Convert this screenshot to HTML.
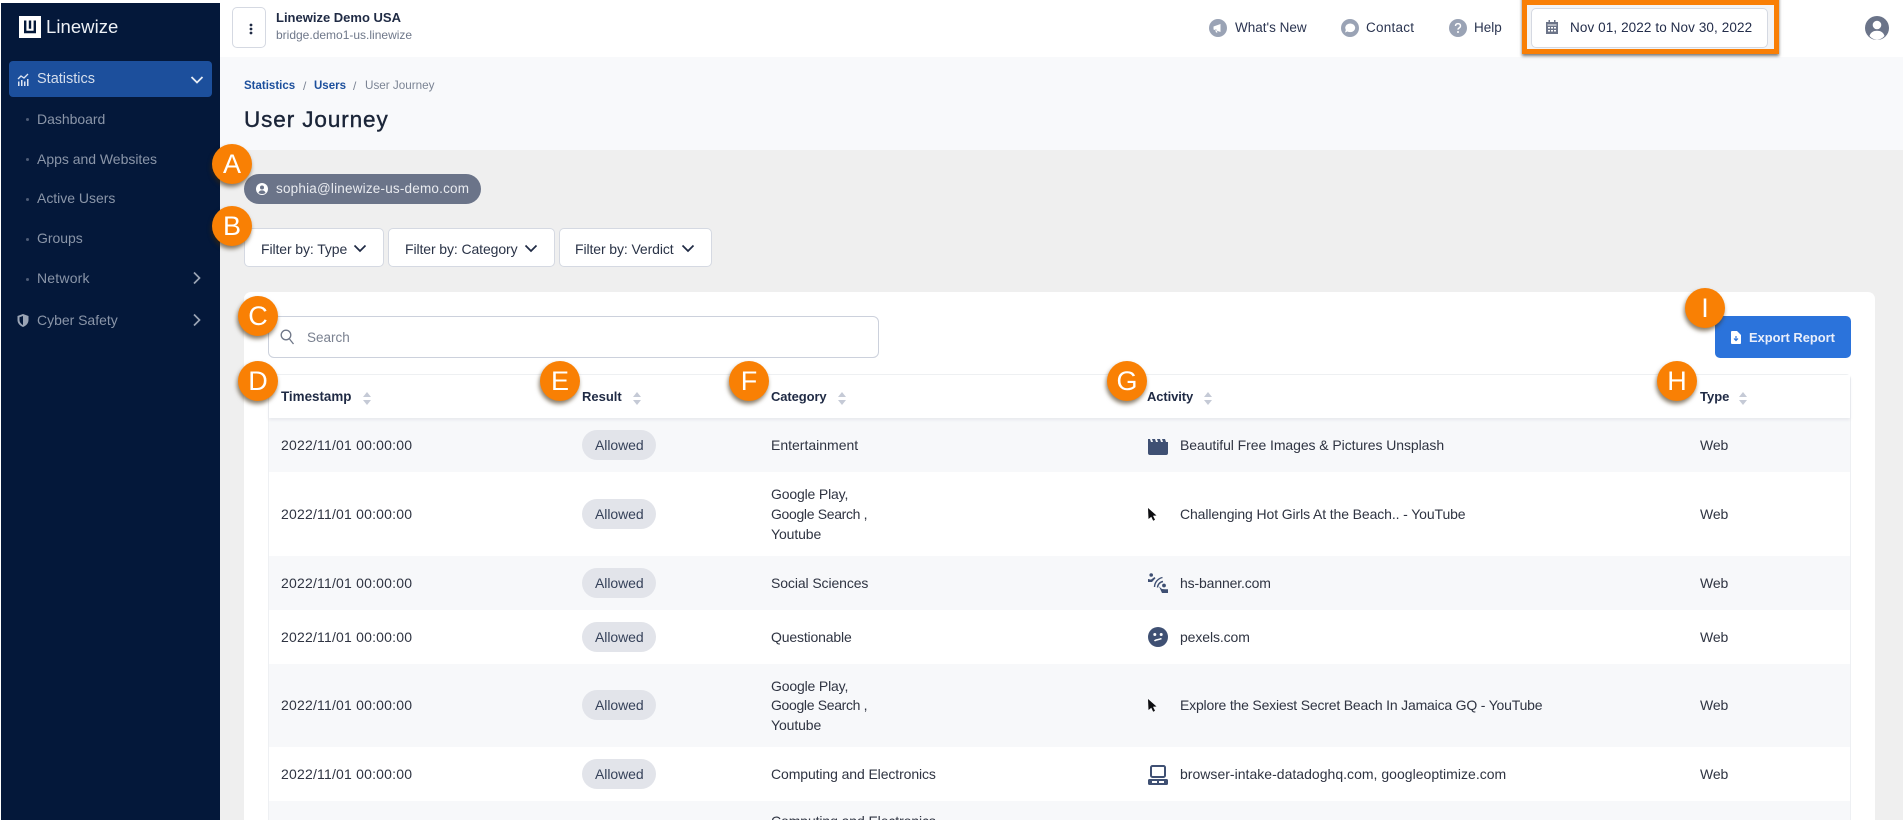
<!DOCTYPE html>
<html><head><meta charset="utf-8"><title>User Journey</title>
<style>
html,body{margin:0;padding:0;background:#fff}
#p{position:relative;width:1903px;height:820px;overflow:hidden;background:#fff;font-family:"Liberation Sans",Arial,sans-serif;font-size:14px;filter:blur(.25px)}
#p div,#p svg{position:absolute}
.t{white-space:nowrap;line-height:20px;height:20px}
.s{color:#8a95a8;font-size:14px;letter-spacing:-.02px}
.d{width:3px;height:3px;border-radius:50%;background:#4e5c76;left:26px}
.f{background:#fff;border:1px solid #d5d9e2;border-radius:5px;box-sizing:border-box;top:228px;height:39px}
.ft{color:#2a3347;top:239px;font-size:14px;letter-spacing:-.1px}
.h{color:#1f2a44;font-weight:700;font-size:13px;top:387px}
.r{left:269px;width:1581px;background:#f7f8fa}
.c{color:#2f3442;font-size:14px;letter-spacing:-.1px}
.ts{letter-spacing:.2px;left:281px}
.a{width:74px;height:30px;border-radius:15px;background:#e2e4ea;left:582px}
.at{color:#36425a;left:595px;font-size:14px;letter-spacing:-.06px}
.w{left:1700px;letter-spacing:-.1px}
.o{width:40px;height:40px;border-radius:50%;background:#f98004;box-shadow:-1px 3px 4px rgba(60,40,10,.6);color:#fff;font-size:27px;line-height:40px;text-align:center;z-index:5}
</style></head><body><div id="p">

<!-- backgrounds -->
<div style="left:220px;top:57px;width:1683px;height:93px;background:#f8f9fb"></div>
<div style="left:220px;top:150px;width:1683px;height:670px;background:#efefef"></div>
<div style="left:244px;top:292px;width:1631px;height:540px;background:#fff;border-radius:7px"></div>

<!-- sidebar -->
<div style="left:1px;top:3px;width:219px;height:817px;background:#04183a"></div>
<div style="left:19px;top:16px;width:22px;height:22px;background:#fff"></div>
<svg style="left:19px;top:16px" width="22" height="22" viewBox="0 0 22 22"><path d="M5 4.500h2.400v10.300h7.200V4.500H17v12.700H5zM9.800 4.500h2.400v8.200H9.800z" fill="#04183a"/></svg>
<div class="t" style="left:46px;top:17px;color:#eef1f6;font-size:18.500px;letter-spacing:.05px">Linewize</div>
<div style="left:9px;top:61px;width:203px;height:36px;background:#1c4f9c;border-radius:4px"></div>
<svg style="left:17px;top:73px" width="13" height="13" viewBox="0 0 13 13"><path d="M1 6l3-3 3 2 4-4" fill="none" stroke="#dfe6f2" stroke-width="1.300"/><path d="M1 8.500h1.500V13H1zM4 7h1.500v6H4zM7 8.500h1.500V13H7zM10 6h1.500v7H10z" fill="#dfe6f2"/></svg>
<div class="t" style="left:37px;top:69px;color:#d5deec;font-size:14.500px">Statistics</div>
<svg style="left:190px;top:75px" width="14" height="10" viewBox="0 0 14 10"><path d="M1.500 2l5.500 5.500L12.500 2" fill="none" stroke="#e8edf5" stroke-width="1.800"/></svg>

<div class="d" style="top:118px"></div><div class="t s" style="left:37px;top:109px">Dashboard</div>
<div class="d" style="top:158px"></div><div class="t s" style="left:37px;top:149px">Apps and Websites</div>
<div class="d" style="top:198px"></div><div class="t s" style="left:37px;top:188px">Active Users</div>
<div class="d" style="top:238px"></div><div class="t s" style="left:37px;top:228px">Groups</div>
<div class="d" style="top:278px"></div><div class="t s" style="left:37px;top:268px;letter-spacing:.2px">Network</div>
<svg style="left:192px;top:271px" width="10" height="14" viewBox="0 0 10 14"><path d="M2 1.500L7.500 7 2 12.500" fill="none" stroke="#9aa4b5" stroke-width="1.700"/></svg>
<svg style="left:17px;top:314px" width="12" height="13" viewBox="0 0 12 13"><path d="M6 0l5.500 2v4c0 3.500-2.500 5.800-5.500 7C3 11.800.5 9.500.5 6V2z" fill="#9aa4b5"/><path d="M6 2v9c-2-1-3.500-2.800-3.500-5V3.300z" fill="#04183a"/></svg>
<div class="t s" style="left:37px;top:310px">Cyber Safety</div>
<svg style="left:192px;top:313px" width="10" height="14" viewBox="0 0 10 14"><path d="M2 1.500L7.500 7 2 12.500" fill="none" stroke="#9aa4b5" stroke-width="1.700"/></svg>

<!-- header -->
<div style="left:232px;top:7px;width:34px;height:41px;box-sizing:border-box;border:1px solid #d5d9e2;border-radius:5px;background:#fff"></div>
<svg style="left:249px;top:23px" width="4" height="12" viewBox="0 0 4 12"><circle cx="2" cy="2" r="1.400" fill="#1f2a44"/><circle cx="2" cy="6" r="1.400" fill="#1f2a44"/><circle cx="2" cy="10" r="1.400" fill="#1f2a44"/></svg>
<div class="t" style="left:276px;top:8px;color:#1f2a44;font-weight:700;font-size:13px">Linewize Demo USA</div>
<div class="t" style="left:276px;top:25px;color:#6f788a;font-size:12px">bridge.demo1-us.linewize</div>

<svg style="left:1209px;top:19px" width="18" height="18" viewBox="0 0 18 18"><circle cx="9" cy="9" r="9" fill="#9aa3b5"/><path d="M4.500 7.500l7-2.500v8l-7-2.500zM6 10.500l1 3h1.500l-1-3z" fill="#fff"/></svg>
<div class="t" style="left:1235px;top:18px;color:#2a3450;font-size:13.500px">What's New</div>
<svg style="left:1341px;top:19px" width="18" height="18" viewBox="0 0 18 18"><circle cx="9" cy="9" r="9" fill="#9aa3b5"/><ellipse cx="9.200" cy="8.800" rx="5" ry="4.300" fill="#fff"/><path d="M5 10.500l-1 3 3.500-1.500z" fill="#fff"/></svg>
<div class="t" style="left:1366px;top:18px;color:#2a3450;font-size:13.500px;letter-spacing:.25px">Contact</div>
<svg style="left:1449px;top:19px" width="18" height="18" viewBox="0 0 18 18"><circle cx="9" cy="9" r="9" fill="#9aa3b5"/><path d="M6.500 7c0-1.500 1.100-2.400 2.500-2.400S11.500 5.500 11.500 7c0 1.800-2.500 1.900-2.500 3.600" fill="none" stroke="#fff" stroke-width="1.500"/><circle cx="9" cy="13" r="1" fill="#fff"/></svg>
<div class="t" style="left:1474px;top:18px;color:#2a3450;font-size:13.500px">Help</div>

<div style="left:1522px;top:-5px;width:257px;height:59px;box-sizing:border-box;border:5px solid #f97f06;border-top-width:10px;border-bottom-width:5px;box-shadow:0 2px 3px rgba(30,30,30,.6);background:#f3f4f6"></div>
<div style="left:1531px;top:8px;width:237px;height:40px;box-sizing:border-box;border:1px solid #d5d9e2;border-radius:5px;background:#fff"></div>
<svg style="left:1546px;top:20px" width="12" height="14" viewBox="0 0 12 14"><path d="M2.500 0h1.500v2h4V0h1.500v2H12v12H0V2h2.500z" fill="#6c7488"/><path d="M1.500 5h9" stroke="#fff"/><path d="M2 7h2v1.500H2zM5 7h2v1.500H5zM8 7h2v1.500H8zM2 10h2v1.500H2zM5 10h2v1.500H5zM8 10h2v1.500H8z" fill="#fff"/></svg>
<div class="t" style="left:1570px;top:18px;color:#232d4a;font-size:13.500px;letter-spacing:.1px">Nov 01, 2022 to Nov 30, 2022</div>
<svg style="left:1865px;top:16px" width="24" height="24" viewBox="0 0 24 24"><circle cx="12" cy="12" r="12" fill="#6b7489"/><circle cx="12" cy="9" r="4.300" fill="#fff"/><path d="M4.500 20c1-3.800 4-5.300 7.500-5.300s6.500 1.500 7.500 5.300A12 12 0 0 1 12 24a12 12 0 0 1-7.500-4z" fill="#fff"/></svg>

<!-- title -->
<div class="t" style="left:244px;top:76px;color:#1c4f9c;font-weight:700;font-size:11.500px">Statistics</div>
<div class="t" style="left:303px;top:76px;color:#7b8494;font-size:12px">/</div>
<div class="t" style="left:314px;top:76px;color:#1c4f9c;font-weight:700;font-size:11.500px">Users</div>
<div class="t" style="left:353px;top:76px;color:#7b8494;font-size:12px">/</div>
<div class="t" style="left:365px;top:76px;color:#7b8494;font-size:11.700px">User Journey</div>
<div class="t" style="left:244px;top:110px;color:#1b2538;font-size:22.500px;letter-spacing:.9px;-webkit-text-stroke:.4px #1b2538">User Journey</div>

<!-- user pill -->
<div style="left:244px;top:174px;width:237px;height:30px;background:#6b7489;border-radius:15px"></div>
<svg style="left:256px;top:183px" width="12" height="12" viewBox="0 0 12 12"><circle cx="6" cy="6" r="6" fill="#fff"/><circle cx="6" cy="4.500" r="2" fill="#6b7489"/><path d="M2.500 10c.5-2 2-2.600 3.500-2.600S9 8 9.500 10A6 6 0 0 1 6 11a6 6 0 0 1-3.500-1z" fill="#6b7489"/></svg>
<div class="t" style="left:276px;top:179px;color:#e9ebf0;font-size:13.500px;letter-spacing:.2px">sophia@linewize-us-demo.com</div>

<!-- filters -->
<div class="f" style="left:244px;width:140px"></div>
<div class="t ft" style="left:261px">Filter by: Type</div>
<svg style="left:353px;top:244px" width="14" height="9" viewBox="0 0 14 9"><path d="M1.500 1.500L7 7l5.500-5.500" fill="none" stroke="#1f2a44" stroke-width="1.700"/></svg>
<div class="f" style="left:388px;width:167px"></div>
<div class="t ft" style="left:405px">Filter by: Category</div>
<svg style="left:524px;top:244px" width="14" height="9" viewBox="0 0 14 9"><path d="M1.500 1.500L7 7l5.500-5.500" fill="none" stroke="#1f2a44" stroke-width="1.700"/></svg>
<div class="f" style="left:559px;width:153px"></div>
<div class="t ft" style="left:575px">Filter by: Verdict</div>
<svg style="left:681px;top:244px" width="14" height="9" viewBox="0 0 14 9"><path d="M1.500 1.500L7 7l5.500-5.500" fill="none" stroke="#1f2a44" stroke-width="1.700"/></svg>

<!-- search / export -->
<div style="left:268px;top:316px;width:611px;height:42px;box-sizing:border-box;border:1px solid #ccd1dc;border-radius:6px;background:#fff"></div>
<svg style="left:280px;top:329px" width="15" height="16" viewBox="0 0 15 16"><circle cx="6" cy="6" r="4.800" fill="none" stroke="#6f7788" stroke-width="1.300"/><path d="M9.500 10l4 5" stroke="#6f7788" stroke-width="1.300"/></svg>
<div class="t" style="left:307px;top:328px;color:#7a8190;font-size:13.500px">Search</div>
<div style="left:1715px;top:316px;width:136px;height:42px;background:#2b73db;border-radius:5px"></div>
<svg style="left:1731px;top:331px" width="10" height="13" viewBox="0 0 10 13"><path d="M0 1a1 1 0 0 1 1-1h5l4 4v8a1 1 0 0 1-1 1H1a1 1 0 0 1-1-1z" fill="#fff"/><path d="M5 5v4M3 7.500L5 9.500l2-2" fill="none" stroke="#2b73db" stroke-width="1.200"/></svg>
<div class="t" style="left:1749px;top:328px;color:#e8eefb;font-weight:700;font-size:12.900px">Export Report</div>

<!-- table -->
<div style="left:268px;top:374px;width:1583px;height:460px;box-sizing:border-box;border:1px solid #eef0f3;border-radius:5px 5px 0 0;background:#fff"></div>
<div style="left:269px;top:375px;width:1581px;height:43px;background:#fff;box-shadow:0 2px 3px rgba(30,40,70,.07);z-index:1"></div>
<div class="r" style="top:418px;height:54px"></div>
<div class="r" style="top:556px;height:54px"></div>
<div class="r" style="top:664px;height:83px"></div>
<div class="r" style="top:801px;height:30px"></div>

<div class="t h" style="left:281px;z-index:2;font-size:13.400px">Timestamp</div>
<div class="t h" style="left:582px;z-index:2">Result</div>
<div class="t h" style="left:771px;z-index:2;letter-spacing:-.1px">Category</div>
<div class="t h" style="left:1147px;z-index:2;letter-spacing:-.1px">Activity</div>
<div class="t h" style="left:1700px;z-index:2">Type</div>
<svg style="left:362px;top:392px;z-index:2" width="10" height="13" viewBox="0 0 10 13"><path d="M5 0l4 5H1zM5 13l4-5H1z" fill="#c5cad6"/></svg>
<svg style="left:632px;top:392px;z-index:2" width="10" height="13" viewBox="0 0 10 13"><path d="M5 0l4 5H1zM5 13l4-5H1z" fill="#c5cad6"/></svg>
<svg style="left:837px;top:392px;z-index:2" width="10" height="13" viewBox="0 0 10 13"><path d="M5 0l4 5H1zM5 13l4-5H1z" fill="#c5cad6"/></svg>
<svg style="left:1203px;top:392px;z-index:2" width="10" height="13" viewBox="0 0 10 13"><path d="M5 0l4 5H1zM5 13l4-5H1z" fill="#c5cad6"/></svg>
<svg style="left:1738px;top:392px;z-index:2" width="10" height="13" viewBox="0 0 10 13"><path d="M5 0l4 5H1zM5 13l4-5H1z" fill="#c5cad6"/></svg>

<!-- row 1 -->
<div class="t c ts" style="top:435px">2022/11/01 00:00:00</div>
<div class="a" style="top:430px"></div><div class="t at" style="top:435px">Allowed</div>
<div class="t c" style="left:771px;top:435px;letter-spacing:0">Entertainment</div>
<svg style="left:1148px;top:439px" width="20" height="16" viewBox="0 0 20 16"><path d="M0 0h2l1 3h2L4 0h3l1 3h2L9 0h3l1 3h2l-1-3h3l1 3h2V0h0v14a2 2 0 0 1-2 2H2a2 2 0 0 1-2-2z" fill="#3f5073"/></svg>
<div class="t c" style="left:1180px;top:435px;letter-spacing:-.07px">Beautiful Free Images &amp; Pictures Unsplash</div>
<div class="t c w" style="top:435px">Web</div>

<!-- row 2 -->
<div class="t c ts" style="top:504px">2022/11/01 00:00:00</div>
<div class="a" style="top:499px"></div><div class="t at" style="top:504px">Allowed</div>
<div class="t c" style="left:771px;top:484px;letter-spacing:-.16px">Google Play,</div>
<div class="t c" style="left:771px;top:504px;letter-spacing:-.33px">Google Search ,</div>
<div class="t c" style="left:771px;top:524px">Youtube</div>
<svg style="left:1148px;top:508px" width="9" height="13" viewBox="0 0 9 13"><path d="M0 0l8.500 7.500-3.500.3 2 4-1.800.9-1.900-4-2.800 2.300z" fill="#0d0d10"/></svg>
<div class="t c" style="left:1180px;top:504px;letter-spacing:-.11px">Challenging Hot Girls At the Beach.. - YouTube</div>
<div class="t c w" style="top:504px">Web</div>

<!-- row 3 -->
<div class="t c ts" style="top:573px">2022/11/01 00:00:00</div>
<div class="a" style="top:568px"></div><div class="t at" style="top:573px">Allowed</div>
<div class="t c" style="left:771px;top:573px">Social Sciences</div>
<svg style="left:1148px;top:573px" width="20" height="20" viewBox="0 0 20 20"><circle cx="3.200" cy="2" r="1.800" fill="#3f5073"/><path d="M0 9V6l3 .6 3.500-2.600 1 1.300L4 9z" fill="#3f5073"/><path d="M9.500 14.500A6.500 6.500 0 0 1 15 8.500M6.500 14A10 10 0 0 1 14.500 4.500" fill="none" stroke="#3f5073" stroke-width="1.400"/><circle cx="16" cy="12.500" r="1.900" fill="#3f5073"/><path d="M11 13.500l3 2.500 3 .3H20V20h-6z" fill="#3f5073"/></svg>
<div class="t c" style="left:1180px;top:573px;letter-spacing:-.14px">hs-banner.com</div>
<div class="t c w" style="top:573px">Web</div>

<!-- row 4 -->
<div class="t c ts" style="top:627px">2022/11/01 00:00:00</div>
<div class="a" style="top:622px"></div><div class="t at" style="top:627px">Allowed</div>
<div class="t c" style="left:771px;top:627px;letter-spacing:-.16px">Questionable</div>
<svg style="left:1148px;top:627px" width="20" height="20" viewBox="0 0 20 20"><circle cx="10" cy="10" r="10" fill="#3f5073"/><circle cx="6.800" cy="7.500" r="1.500" fill="#fff"/><circle cx="13.200" cy="7.500" r="1.500" fill="#fff"/><path d="M6.500 14c1.500-1.800 4.500-1 7-2.500" fill="none" stroke="#fff" stroke-width="1.500"/></svg>
<div class="t c" style="left:1180px;top:627px;letter-spacing:-.1px">pexels.com</div>
<div class="t c w" style="top:627px">Web</div>

<!-- row 5 -->
<div class="t c ts" style="top:695px">2022/11/01 00:00:00</div>
<div class="a" style="top:690px"></div><div class="t at" style="top:695px">Allowed</div>
<div class="t c" style="left:771px;top:676px;letter-spacing:-.16px">Google Play,</div>
<div class="t c" style="left:771px;top:695px;letter-spacing:-.33px">Google Search ,</div>
<div class="t c" style="left:771px;top:715px">Youtube</div>
<svg style="left:1148px;top:699px" width="9" height="13" viewBox="0 0 9 13"><path d="M0 0l8.500 7.500-3.500.3 2 4-1.800.9-1.900-4-2.800 2.300z" fill="#0d0d10"/></svg>
<div class="t c" style="left:1180px;top:695px;letter-spacing:-.19px">Explore the Sexiest Secret Beach In Jamaica GQ - YouTube</div>
<div class="t c w" style="top:695px">Web</div>

<!-- row 6 -->
<div class="t c ts" style="top:764px">2022/11/01 00:00:00</div>
<div class="a" style="top:759px"></div><div class="t at" style="top:764px">Allowed</div>
<div class="t c" style="left:771px;top:764px;letter-spacing:-.1px">Computing and Electronics</div>
<svg style="left:1148px;top:765px" width="20" height="20" viewBox="0 0 20 20"><rect x="3" y="1" width="14" height="11" rx="1.500" fill="none" stroke="#3f5073" stroke-width="2"/><rect x="0" y="14" width="20" height="6" rx="1.500" fill="#3f5073"/><path d="M4 16h5v2H4zM11 16h5v2h-5z" fill="#fff"/></svg>
<div class="t c" style="left:1180px;top:764px;letter-spacing:.02px">browser-intake-datadoghq.com, googleoptimize.com</div>
<div class="t c w" style="top:764px">Web</div>

<!-- row 7 -->
<div class="t c" style="left:771px;top:811px">Computing and Electronics ,</div>

<!-- callouts -->
<div class="o" style="left:212px;top:144px">A</div>
<div class="o" style="left:212px;top:206px">B</div>
<div class="o" style="left:238px;top:296px">C</div>
<div class="o" style="left:238px;top:361px">D</div>
<div class="o" style="left:540px;top:361px">E</div>
<div class="o" style="left:729px;top:361px">F</div>
<div class="o" style="left:1107px;top:361px">G</div>
<div class="o" style="left:1657px;top:361px">H</div>
<div class="o" style="left:1685px;top:288px">I</div>

</div></body></html>
